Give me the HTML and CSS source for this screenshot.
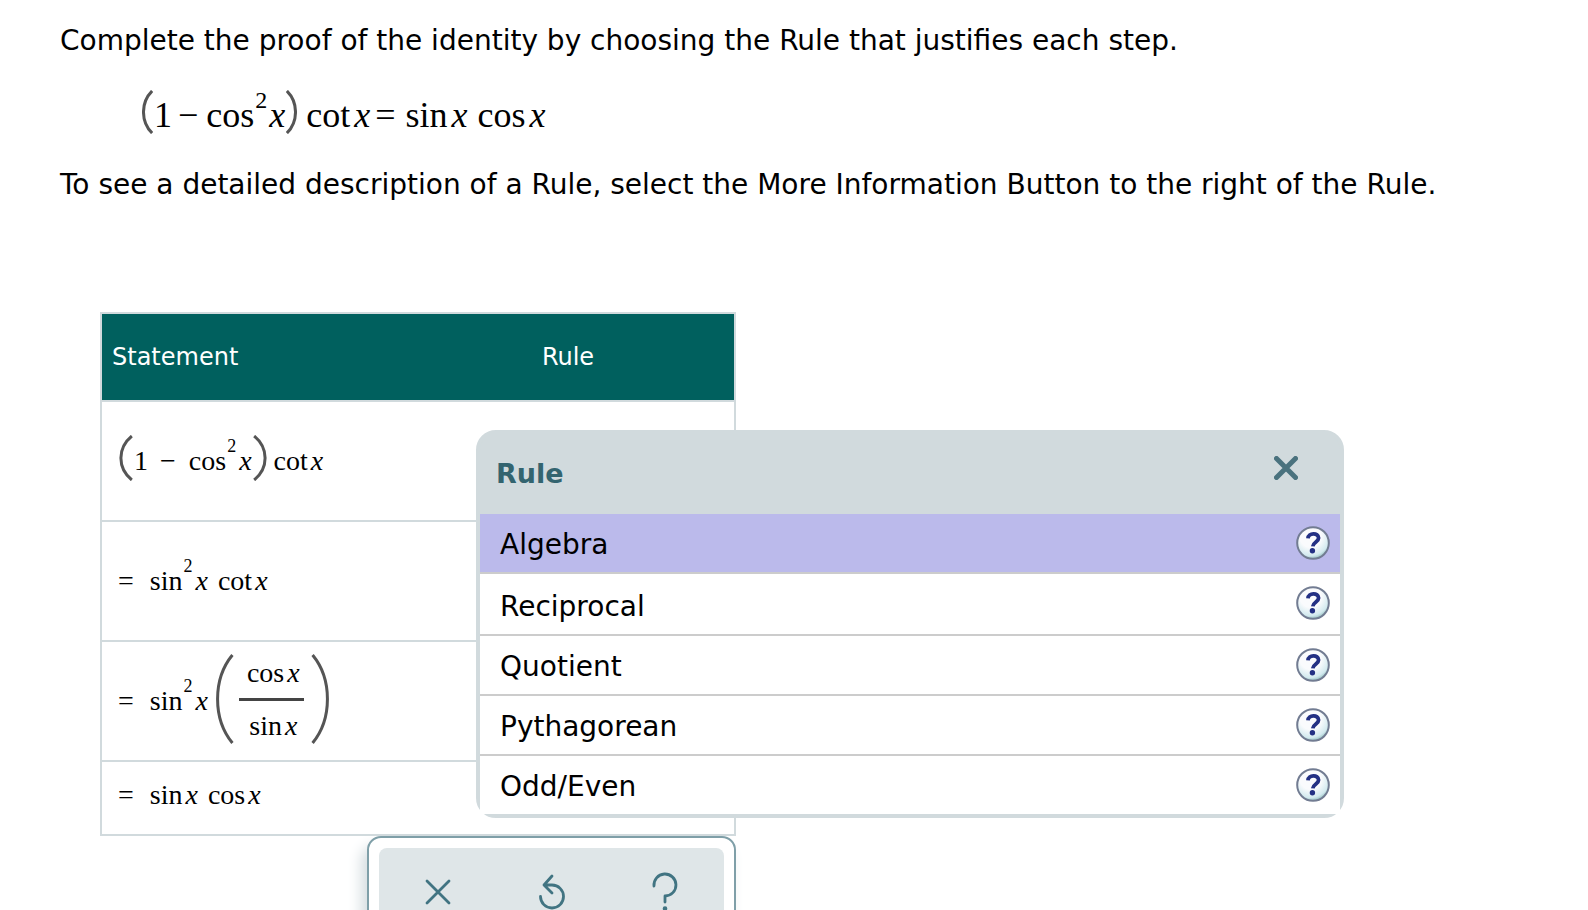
FILE: index.html
```html
<!DOCTYPE html>
<html lang="en">
<head>
<meta charset="utf-8">
<title>Proving a trigonometric identity</title>
<link rel="stylesheet" href="styles.css">
</head>
<body>
<svg class="defs" aria-hidden="true">
  <defs>
    <radialGradient id="ball" cx="0.42" cy="0.3" r="0.75">
      <stop offset="0.45" stop-color="#fafbfd"/>
      <stop offset="0.8" stop-color="#d3eaef"/>
      <stop offset="1" stop-color="#7fb0ae"/>
    </radialGradient>
    <symbol id="info" viewBox="0 0 34 34">
      <circle cx="17" cy="17" r="15.8" fill="url(#ball)" stroke="#727c92" stroke-width="2"/>
      <path d="M12 12.4C12.2 6.6 22.6 6.4 22.6 12C22.6 16 17.2 15.8 16.8 20.4" fill="none" stroke="#243184" stroke-width="3.8"/>
      <circle cx="16.4" cy="24.8" r="2.7" fill="#243184"/>
    </symbol>
    <symbol id="open" viewBox="0 0 12 46" preserveAspectRatio="none">
      <path d="M11 1C-1.5 13 -1.5 33 11 45" fill="none" stroke="#555" stroke-width="3" vector-effect="non-scaling-stroke"/>
    </symbol>
    <symbol id="close" viewBox="0 0 12 46" preserveAspectRatio="none">
      <path d="M1 1C13.5 13 13.5 33 1 45" fill="none" stroke="#555" stroke-width="3" vector-effect="non-scaling-stroke"/>
    </symbol>
  </defs>
</svg>
<main class="page">
  <p class="text">Complete the proof of the identity by choosing the Rule that justifies each step.</p>
  <div class="math math-large">
    <svg class="paren"><use href="#open"/></svg>
    <span class="one">1</span><span class="minus">−</span><span>cos</span><sup>2</sup><i>x</i>
    <svg class="paren"><use href="#close"/></svg>
    <span class="factor">cot</span><i>x</i><span class="equals">=</span><span>sin</span><i>x</i><span class="term">cos</span><i>x</i>
  </div>
  <p class="text">To see a detailed description of a Rule, select the More Information Button to the right of the Rule.</p>

  <section class="work">
    <div class="proof">
      <table class="steps">
        <thead>
          <tr><th scope="col" class="col-statement">Statement</th><th scope="col">Rule</th></tr>
        </thead>
        <tbody>
          <tr><td><div class="math">
            <svg class="paren"><use href="#open"/></svg>
            <span class="one">1</span><span class="minus">−</span><span>cos</span><sup>2</sup><i>x</i>
            <svg class="paren"><use href="#close"/></svg>
            <span class="factor">cot</span><i>x</i>
          </div></td><td></td></tr>
          <tr><td><div class="math">
            <span class="equals">=</span><span>sin</span><sup>2</sup><i>x</i><span class="term">cot</span><i>x</i>
          </div></td><td></td></tr>
          <tr><td><div class="math">
            <span class="equals">=</span><span>sin</span><sup>2</sup><i>x</i>
            <svg class="paren tall"><use href="#open"/></svg>
            <span class="fraction">
              <span class="numerator"><span>cos</span><i>x</i></span>
              <span class="denominator"><span>sin</span><i>x</i></span>
            </span>
            <svg class="paren tall"><use href="#close"/></svg>
          </div></td><td></td></tr>
          <tr class="last"><td><div class="math">
            <span class="equals">=</span><span>sin</span><i>x</i><span class="term">cos</span><i>x</i>
          </div></td><td></td></tr>
        </tbody>
      </table>
      <div class="toolbar">
        <div class="tools">
          <button type="button" aria-label="Clear"><svg viewBox="0 0 40 40"><path d="M9 9L31 31M31 9L9 31"/></svg></button>
          <button type="button" aria-label="Undo"><svg viewBox="0 0 40 40"><path d="M20 4L12 13L20 21M12 13H20A11.5 11.5 0 1 1 8.5 24.5"/></svg></button>
          <button type="button" aria-label="Help"><svg viewBox="0 0 40 40"><path d="M9 14A11 11 0 1 1 20 24V30"/><circle cx="20" cy="36.5" r="2.3"/></svg></button>
        </div>
      </div>
    </div>

    <div class="popup" role="dialog" aria-labelledby="popup-title">
      <div class="popup-head">
        <h2 id="popup-title">Rule</h2>
        <button type="button" class="dismiss" aria-label="Close"><svg viewBox="0 0 24 24"><path d="M2.5 2.5L21.5 21.5M21.5 2.5L2.5 21.5"/></svg></button>
      </div>
      <ul class="rules">
        <li class="selected"><button type="button" class="rule">Algebra</button><button type="button" class="info" aria-label="More information about Algebra"><svg><use href="#info"/></svg></button></li>
        <li><button type="button" class="rule">Reciprocal</button><button type="button" class="info" aria-label="More information about Reciprocal"><svg><use href="#info"/></svg></button></li>
        <li><button type="button" class="rule">Quotient</button><button type="button" class="info" aria-label="More information about Quotient"><svg><use href="#info"/></svg></button></li>
        <li><button type="button" class="rule">Pythagorean</button><button type="button" class="info" aria-label="More information about Pythagorean"><svg><use href="#info"/></svg></button></li>
        <li><button type="button" class="rule">Odd/Even</button><button type="button" class="info" aria-label="More information about Odd/Even"><svg><use href="#info"/></svg></button></li>
      </ul>
    </div>
  </section>
</main>
</body>
</html>
```
FILE: styles.css
```css
* { box-sizing: border-box; }

body {
  margin: 0;
  background: #fff;
  color: #000;
  font-family: Verdana, "DejaVu Sans", sans-serif;
  font-size: 28px;
}

button {
  padding: 0;
  border: 0;
  background: none;
  color: inherit;
  font: inherit;
  cursor: pointer;
}

svg { display: block; }

.defs {
  position: absolute;
  width: 0;
  height: 0;
}

.page {
  height: 100vh;
  padding-top: 21px;
  overflow: hidden;
}

.text {
  margin: 0 0 0 60px;
  line-height: 40px;
}

/* Formulas */
.math {
  display: flex;
  align-items: center;
  font-family: "Liberation Serif", "Times New Roman", serif;
  font-size: 28px;
  line-height: 28px;
}

.math sup {
  margin: 0 3px 30px 1px;
  font-size: 18px;
  line-height: 18px;
}

.math i { margin-left: 3px; }
.math sup + i { margin-left: 0; }

.paren {
  width: 14px;
  height: 46px;
  margin: 0 0 6px 1px;
}

.paren.tall {
  width: 19px;
  height: 92px;
  margin: 0 5px 4px 7px;
}

.one { margin-left: 1px; }
.minus { margin: 0 13px 0 12px; }
.factor { margin-left: 7px; }
.equals { margin-right: 16px; }
.term { margin-left: 10px; }

.fraction {
  display: flex;
  flex-direction: column;
  margin: 0 0 4px;
}

.numerator,
.denominator {
  display: flex;
  justify-content: center;
  padding: 0 4px 0 8px;
}

.numerator {
  padding-bottom: 11px;
  border-bottom: 3px solid #444;
}

.denominator { padding-top: 11px; }

.math-large {
  height: 48px;
  margin: 30px 0 26px 141px;
  font-size: 36px;
  line-height: 36px;
}

.math-large sup {
  margin: 0 2px 30px 1px;
  font-size: 24px;
  line-height: 24px;
}

.math-large i { margin-left: 4px; }
.math-large .paren { width: 11px; height: 44px; }
.math-large .minus { margin: 0 8px 0 6px; }
.math-large .factor { margin-left: 9px; }
.math-large .equals { margin: 0 10px 0 5px; }

/* Proof table */
.work {
  position: relative;
  margin: 107px 0 0 100px;
}

.proof {
  display: flex;
  flex-direction: column;
  width: calc(40vw + 1px);
}

.steps {
  width: 100%;
  border: 2px solid #d1dadd;
  border-collapse: separate;
  border-spacing: 0;
}

.steps th {
  height: 86px;
  padding: 0 10px;
  background: #00605e;
  color: #fff;
  font-size: 24px;
  font-weight: 400;
  text-align: left;
}

.steps .col-statement { width: 68%; }

.steps td {
  height: 120px;
  padding: 0 0 0 16px;
  border-top: 2px solid #d1dadd;
}

.steps .last td { height: 74px; padding-bottom: 6px; }

/* Answer toolbar */
.toolbar {
  align-self: flex-end;
  width: 58%;
  padding: 10px;
  border: 2px solid #7f9fa8;
  border-radius: 14px;
  background: #fff;
  box-shadow: -6px 10px 14px #d5dde0;
}

.tools {
  display: flex;
  justify-content: space-around;
  height: 100px;
  padding: 24px 2px 0;
  border-radius: 8px;
  background: #dfe6e8;
}

.tools button,
.tools svg { width: 40px; height: 40px; }

.tools path {
  fill: none;
  stroke: #417482;
  stroke-width: 2.8;
  stroke-linecap: round;
  stroke-linejoin: round;
}

.tools circle { fill: #417482; }

/* Rule picker */
.popup {
  position: absolute;
  top: 118px;
  left: 376px;
  right: 244px;
  border: 4px solid #d1dadd;
  border-radius: 20px;
  background: #d1dadd;
}

.popup-head {
  display: flex;
  justify-content: space-between;
  height: 80px;
  padding: 20px 42px 0 16px;
}

.popup-head h2 {
  margin: 0;
  color: #33646f;
  font-size: 27px;
  line-height: 40px;
}

.dismiss { align-self: flex-start; margin-top: 2px; }
.dismiss svg { width: 24px; height: 24px; }

.dismiss path {
  stroke: #4a727e;
  stroke-width: 5;
  stroke-linecap: round;
}

.rules {
  margin: 0;
  padding: 0;
  background: #fff;
  list-style: none;
}

.rules li {
  display: flex;
  height: 60px;
  padding: 11px 10px 0 20px;
  border-bottom: 2px solid #ccc;
}

.rules li:last-child { height: 58px; border-bottom: 0; }
.rules .selected { background: #bbbaeb; }
.selected + li { height: 62px; }

.rule {
  flex: 1;
  height: 40px;
  line-height: 40px;
  text-align: left;
}

.selected + li .rule { margin-top: 2px; }
.info { align-self: flex-start; margin-top: 1px; }
.info svg { width: 34px; height: 34px; }
```
